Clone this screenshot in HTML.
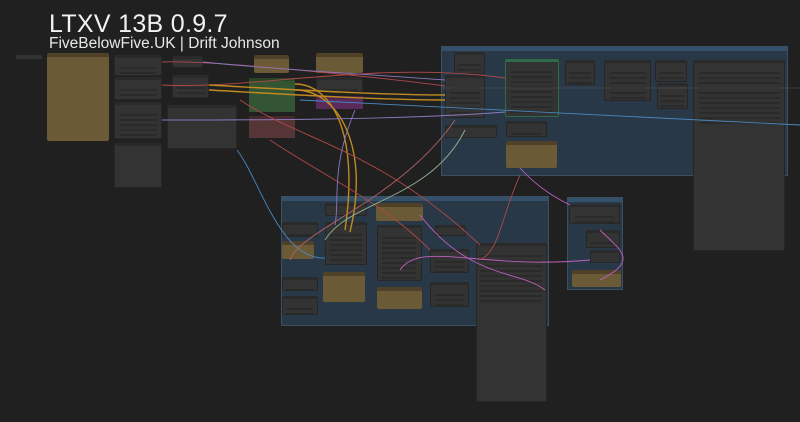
<!DOCTYPE html>
<html><head><style>
*{margin:0;padding:0;box-sizing:border-box}
body{width:800px;height:422px;background:#202020;overflow:hidden;position:relative;font-family:"Liberation Sans",sans-serif}
.g{position:absolute;background:#283846;border:1px solid #3a5060}
.g i{display:block;height:4px;background:#35506a}
.n{position:absolute;background:#333;border:1px solid #262626;border-top:3px solid #2a2a2a;border-radius:2px;background-image:repeating-linear-gradient(#333 0 3px,#2a2a2a 3px 5px);background-size:80% 100%;background-position:50% 6px;background-repeat:no-repeat}
.t{position:absolute;background:#6a5a36;border-top:4px solid #4e4128;border-radius:2px}
.gr{position:absolute;background:#335533;border-top:3px solid #2a442a}
.rd{position:absolute;background:#553535;border-top:3px solid #442a2a}
.pu{position:absolute;background:#5a2a5a;border-top:3px solid #4a224a}
h1{position:absolute;left:49px;top:10px;font-size:25px;font-weight:normal;color:#f2f2f2;letter-spacing:0.3px}
h2{position:absolute;left:49px;top:35px;font-size:15.5px;font-weight:normal;color:#e8e8e8}
svg{position:absolute;left:0;top:0}
</style></head><body>
<h1>LTXV 13B 0.9.7</h1>
<h2>FiveBelowFive.UK | Drift Johnson</h2>
<div style="position:absolute;left:16px;top:55px;width:26px;height:4px;background:#333"></div>
<div class="g" style="left:441px;top:46px;width:347px;height:130px"><i></i></div>
<div class="g" style="left:281px;top:196px;width:268px;height:130px"><i></i></div>
<div class="g" style="left:567px;top:197px;width:56px;height:93px"><i></i></div>

<div class="t" style="left:47px;top:53px;width:62px;height:88px"></div>
<div class="n" style="left:114px;top:55px;width:48px;height:21px"></div>
<div class="n" style="left:114px;top:77px;width:48px;height:23px"></div>
<div class="n" style="left:114px;top:102px;width:48px;height:37px"></div>
<div class="n" style="left:114px;top:143px;width:48px;height:45px;background-image:none"></div>
<div class="n" style="left:172px;top:56px;width:31px;height:12px"></div>
<div class="n" style="left:172px;top:75px;width:37px;height:23px"></div>
<div class="n" style="left:167px;top:105px;width:70px;height:44px;background-image:none"></div>
<div class="t" style="left:254px;top:55px;width:35px;height:18px"></div>
<div class="t" style="left:316px;top:53px;width:47px;height:20px"></div>
<div class="gr" style="left:249px;top:78px;width:46px;height:34px"></div>
<div class="rd" style="left:249px;top:116px;width:46px;height:22px"></div>
<div class="n" style="left:316px;top:77px;width:47px;height:15px"></div>
<div class="pu" style="left:316px;top:96px;width:47px;height:13px"></div>

<div class="n" style="left:454px;top:52px;width:31px;height:22px"></div>
<div class="n" style="left:445px;top:75px;width:40px;height:43px"></div>
<div class="n" style="left:505px;top:59px;width:54px;height:58px;border-color:#2f6a4a"></div>
<div class="n" style="left:565px;top:60px;width:30px;height:25px"></div>
<div class="n" style="left:604px;top:60px;width:47px;height:41px"></div>
<div class="n" style="left:655px;top:60px;width:32px;height:22px"></div>
<div class="n" style="left:657px;top:83px;width:31px;height:26px"></div>
<div class="n" style="left:693px;top:60px;width:92px;height:191px;background-size:90% 55px"></div>
<div class="n" style="left:445px;top:125px;width:52px;height:13px"></div>
<div class="n" style="left:506px;top:121px;width:41px;height:16px"></div>
<div class="t" style="left:506px;top:141px;width:51px;height:27px"></div>

<div class="n" style="left:282px;top:222px;width:36px;height:15px"></div>
<div class="t" style="left:282px;top:241px;width:32px;height:18px"></div>
<div class="n" style="left:282px;top:277px;width:36px;height:14px"></div>
<div class="n" style="left:282px;top:296px;width:36px;height:19px"></div>
<div class="n" style="left:325px;top:203px;width:42px;height:13px"></div>
<div class="n" style="left:325px;top:222px;width:42px;height:43px"></div>
<div class="t" style="left:323px;top:272px;width:42px;height:30px"></div>
<div class="t" style="left:376px;top:203px;width:47px;height:18px"></div>
<div class="n" style="left:377px;top:225px;width:45px;height:56px"></div>
<div class="t" style="left:377px;top:287px;width:45px;height:22px"></div>
<div class="n" style="left:435px;top:225px;width:31px;height:11px"></div>
<div class="n" style="left:430px;top:249px;width:39px;height:24px"></div>
<div class="n" style="left:430px;top:282px;width:39px;height:25px"></div>
<div class="n" style="left:476px;top:243px;width:71px;height:159px;background-size:90% 50px"></div>

<div class="n" style="left:569px;top:204px;width:51px;height:20px"></div>
<div class="n" style="left:586px;top:230px;width:34px;height:18px"></div>
<div class="n" style="left:590px;top:250px;width:30px;height:13px"></div>
<div class="t" style="left:572px;top:270px;width:49px;height:17px"></div>

<svg width="800" height="422" fill="none" stroke-width="0.9">
<path d="M162 62 C220 60,400 80,445 86" stroke="#b04848"/>
<path d="M162 85 C250 90,380 60,505 78" stroke="#b04848"/>
<path d="M209 85 C300 90,380 95,445 95" stroke="#c08a20" stroke-width="1.4"/>
<path d="M209 90 C300 95,380 100,445 100" stroke="#c08a20" stroke-width="1.4"/>
<path d="M295 84 C330 84,360 130,345 230" stroke="#c08a20" stroke-width="1.4"/>
<path d="M295 90 C340 90,370 150,350 232" stroke="#c08a20" stroke-width="1.4"/>
<path d="M237 150 C260 180,280 260,325 258" stroke="#4a88c0"/>
<path d="M162 120 C250 120,400 120,505 112" stroke="#8a78c0"/>
<path d="M203 62 C280 70,380 75,445 80" stroke="#8a78c0"/>
<path d="M240 100 C300 140,380 150,480 245" stroke="#b04848"/>
<path d="M270 140 C330 180,380 200,430 250" stroke="#b04848"/>
<path d="M355 110 C330 170,340 200,335 225" stroke="#8a78c0"/>
<path d="M465 130 C430 200,350 200,325 240" stroke="#90b090"/>
<path d="M455 120 C400 200,300 230,290 260" stroke="#b06060"/>
<path d="M400 270 C420 240,480 270,590 260" stroke="#c060c0"/>
<path d="M420 215 C470 280,520 270,545 290" stroke="#c060c0"/>
<path d="M520 168 C540 190,560 200,570 205" stroke="#c060c0"/>
<path d="M520 175 C500 220,500 250,480 260" stroke="#b04848"/>
<path d="M300 100 C500 110,700 120,800 125" stroke="#4a88c0"/>
<path d="M441 88 L800 88" stroke="#666" stroke-width="0.4"/>
<path d="M600 230 C620 250,640 260,600 280" stroke="#c060c0"/>
</svg>
</body></html>
